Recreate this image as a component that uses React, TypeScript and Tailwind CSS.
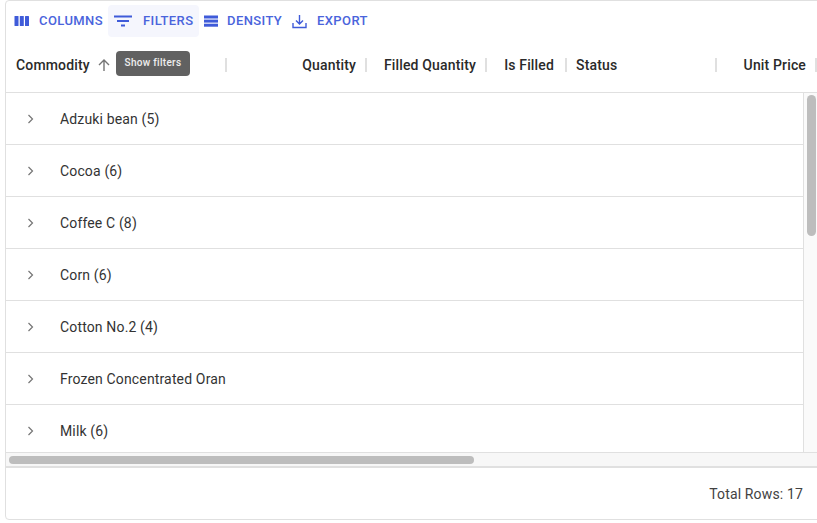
import React from "react";

const rows = ["Adzuki bean (5)", "Cocoa (6)", "Coffee C (8)", "Corn (6)", "Cotton No.2 (4)", "Frozen Concentrated Oran", "Milk (6)"];

const Sep = () => <div className="w-[2px] h-[14px] bg-[#e0e0e0] shrink-0" />;

const Header = ({ w, label, align }: { w: string; label: string; align: string }) => (
  <div className={`${w} shrink-0 h-full flex items-center`}>
    <div className={`flex-1 min-w-0 font-medium text-[14px] tracking-[0.15px] text-[#2a2a2a] whitespace-nowrap ${align}`}>{label}</div>
    <Sep />
  </div>
);

const ToolBtn = ({ icon, label, className }: { icon: React.ReactNode; label: string; className: string }) => (
  <div className={`flex items-center h-[32px] rounded-[4px] text-[13px] font-medium tracking-[0.4px] text-[#4a64dc] ${className}`}>
    {icon}
    <span>{label}</span>
  </div>
);

export default function App() {
  return (
    <div className="w-[817px] h-[523px] overflow-hidden bg-white font-['Roboto',sans-serif] pl-[5px] relative">
      <div className="w-[900px] h-[520px] border border-[#e0e0e0] rounded-[4px] flex flex-col">
        <div className="h-[37px] pt-[4px] pl-[8px] flex items-start shrink-0">
          <ToolBtn
            className="w-[94px]"
            label="COLUMNS"
            icon={
              <svg width="16" height="12" viewBox="0 0 16 12" className="mr-[9px] fill-[#3f5bd9]">
                <rect x="0.5" y="1" width="4" height="10" rx="0.5" />
                <rect x="5.8" y="1" width="4" height="10" rx="0.5" />
                <rect x="11" y="1" width="4" height="10" rx="0.5" />
              </svg>
            }
          />
          <ToolBtn
            className="w-[91px] bg-[#f5f6fd] pl-[6px]"
            label="FILTERS"
            icon={
              <svg width="18" height="12" viewBox="0 0 18 12" className="mr-[11px] fill-[#3f5bd9]">
                <rect x="0" y="0.5" width="18" height="2" />
                <rect x="3" y="5" width="12" height="2" />
                <rect x="7" y="9.5" width="4" height="2" />
              </svg>
            }
          />
          <ToolBtn
            className="w-[93px] pl-[5px]"
            label="DENSITY"
            icon={
              <svg width="14" height="12" viewBox="0 0 14 12" className="mr-[9px] fill-[#3f5bd9]">
                <rect x="0" y="0.5" width="14" height="3" />
                <rect x="0" y="4.6" width="14" height="3" />
                <rect x="0" y="8.7" width="14" height="3" />
              </svg>
            }
          />
          <ToolBtn
            className=""
            label="EXPORT"
            icon={
              <svg width="15" height="15" viewBox="0 0 15 15" fill="none" stroke="#3f5bd9" strokeWidth="1.4" className="mr-[10px]">
                <path d="M7.5 1v8.5M4 6.5l3.5 3.5L11 6.5" />
                <path d="M1 9v4.5h13V9" />
              </svg>
            }
          />
        </div>

        <div className="h-[55px] flex items-center border-b border-[#e0e0e0] shrink-0">
          <div className="w-[221px] shrink-0 h-full flex items-center">
            <div className="flex-1 flex items-center pl-[10px] font-medium text-[14px] tracking-[0.15px] text-[#2a2a2a]">
              Commodity
              <svg width="14" height="14" viewBox="0 0 14 14" fill="none" stroke="#757575" strokeWidth="1.4" className="ml-[7px]">
                <path d="M7 13V2M2 7l5-5 5 5" />
              </svg>
            </div>
            <Sep />
          </div>
          <Header w="w-[140px]" label="Quantity" align="text-right pr-[9px]" />
          <Header w="w-[120px]" label="Filled Quantity" align="text-right pr-[9px]" />
          <Header w="w-[80px]" label="Is Filled" align="text-right pr-[11px]" />
          <Header w="w-[150px]" label="Status" align="pl-[9px]" />
          <Header w="w-[100px]" label="Unit Price" align="text-right pr-[9px]" />
        </div>

        <div className="flex h-[359px] overflow-hidden shrink-0">
          <div className="w-[798px] shrink-0 border-r border-[#e0e0e0]">
            {rows.map((r) => (
              <div key={r} className="h-[52px] border-b border-[#e0e0e0] flex items-center pt-px text-[14px] tracking-[0.15px] text-[#333333] shrink-0">
                <div className="w-[54px] pl-[18px] shrink-0 flex">
                  <svg width="14" height="14" viewBox="0 0 14 14" fill="none" stroke="#757575" strokeWidth="1.2">
                    <path d="M4.5 3L8.5 7l-4 4" />
                  </svg>
                </div>
                <span className="whitespace-nowrap">{r}</span>
              </div>
            ))}
          </div>
          <div className="w-[13px] bg-[#fafafa] pt-[2px] pl-[3px]">
            <div className="w-[9px] h-[141px] rounded-full bg-[#bdbdbd]" />
          </div>
        </div>

        <div className="h-[16px] bg-[#f7f7f7] border-t border-[#e0e0e0] border-b-2 shrink-0 pl-[3px] pt-[3px]">
          <div className="w-[465px] h-[8px] rounded-full bg-[#bdbdbd]" />
        </div>

        <div className="h-[51px] w-[797px] flex items-center justify-end pt-[2px] text-[14px] tracking-[0.15px] text-[#424242]">Total Rows: 17</div>
      </div>

      <div className="absolute left-[116px] top-[51px] w-[74px] h-[25px] pb-[2px] rounded-[4px] bg-[#616161] text-white/90 text-[10px] font-medium tracking-[0.3px] flex items-center justify-center">
        Show filters
      </div>
    </div>
  );
}
